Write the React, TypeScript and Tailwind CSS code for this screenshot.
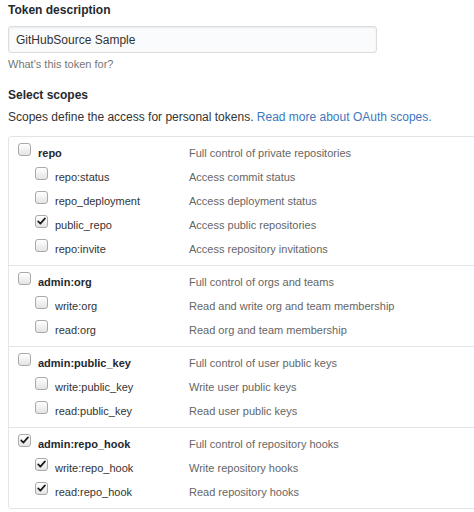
type Scope = { name: string; description: string; checked?: boolean };
type Group = { parent: Scope; children: Scope[] };

const groups: Group[] = [
	{
		parent: { name: "repo", description: "Full control of private repositories" },
		children: [
			{ name: "repo:status", description: "Access commit status" },
			{ name: "repo_deployment", description: "Access deployment status" },
			{ name: "public_repo", description: "Access public repositories", checked: true },
			{ name: "repo:invite", description: "Access repository invitations" },
		],
	},
	{
		parent: { name: "admin:org", description: "Full control of orgs and teams" },
		children: [
			{ name: "write:org", description: "Read and write org and team membership" },
			{ name: "read:org", description: "Read org and team membership" },
		],
	},
	{
		parent: { name: "admin:public_key", description: "Full control of user public keys" },
		children: [
			{ name: "write:public_key", description: "Write user public keys" },
			{ name: "read:public_key", description: "Read user public keys" },
		],
	},
	{
		parent: { name: "admin:repo_hook", description: "Full control of repository hooks", checked: true },
		children: [
			{ name: "write:repo_hook", description: "Write repository hooks", checked: true },
			{ name: "read:repo_hook", description: "Read repository hooks", checked: true },
		],
	},
];

function Checkbox({ checked }: { checked?: boolean }) {
	return (
		<span className="mb-[7px] flex size-[13px] shrink-0 items-center justify-center rounded-[3px] border border-[#a9a9a9] bg-gradient-to-b from-white to-[#e4e4e4]">
			{checked && (
				<svg viewBox="0 0 13 13" className="size-[13px]">
					<path
						d="M2.6 6.4 L5.2 9 L10.6 2.8"
						fill="none"
						stroke="#1a1a1a"
						strokeWidth="2"
						strokeLinecap="round"
						strokeLinejoin="round"
					/>
				</svg>
			)}
		</span>
	);
}

function ScopeRow({ scope, sub }: { scope: Scope; sub?: boolean }) {
	return (
		<div className="flex h-[24px] items-center">
			<div
				className={`flex w-[180px] shrink-0 items-center gap-[7px] ${sub ? "pl-[26px]" : "pl-[9px]"}`}
			>
				<Checkbox checked={scope.checked} />
				<span
					className={`text-[11px] leading-none ${sub ? "text-[#333]" : "font-bold text-[#24292e]"}`}
				>
					{scope.name}
				</span>
			</div>
			<span className="text-[11px] leading-none text-[#666]">
				{scope.description}
			</span>
		</div>
	);
}

export default function App() {
	return (
		<div className="h-[512px] w-[474px] overflow-hidden bg-white pl-2 font-['Liberation_Sans',Arial,sans-serif]">
			<div className="text-[12px] font-bold leading-[20px] text-[#24292e]">
				Token description
			</div>
			<div className="mt-[6px] flex h-[27px] w-[369px] items-center rounded-[3px] border border-[#dcdcdc] bg-[#fafbfc] pl-[7px] text-[12px] text-[#333] shadow-[inset_0_1px_2px_rgba(27,31,35,0.075)]">
				GitHubSource Sample
			</div>
			<div className="mt-[3px] text-[11px] leading-[16px] text-[#767676]">
				What's this token for?
			</div>
			<div className="mt-[15px] text-[12px] font-bold leading-[16px] text-[#24292e]">
				Select scopes
			</div>
			<div className="mt-[6px] text-[12px] leading-[16px] text-[#333]">
				Scopes define the access for personal tokens.{" "}
				<span className="text-[#4078c0]">Read more about OAuth scopes.</span>
			</div>
			<div className="mt-[11px] w-[480px] rounded-[3px] border border-[#e1e4e8]">
				{groups.map((group) => (
					<div
						key={group.parent.name}
						className="border-b border-[#e1e4e8] py-[4px] last:border-b-0"
					>
						<ScopeRow scope={group.parent} />
						{group.children.map((child) => (
							<ScopeRow key={child.name} scope={child} sub />
						))}
					</div>
				))}
			</div>
		</div>
	);
}
